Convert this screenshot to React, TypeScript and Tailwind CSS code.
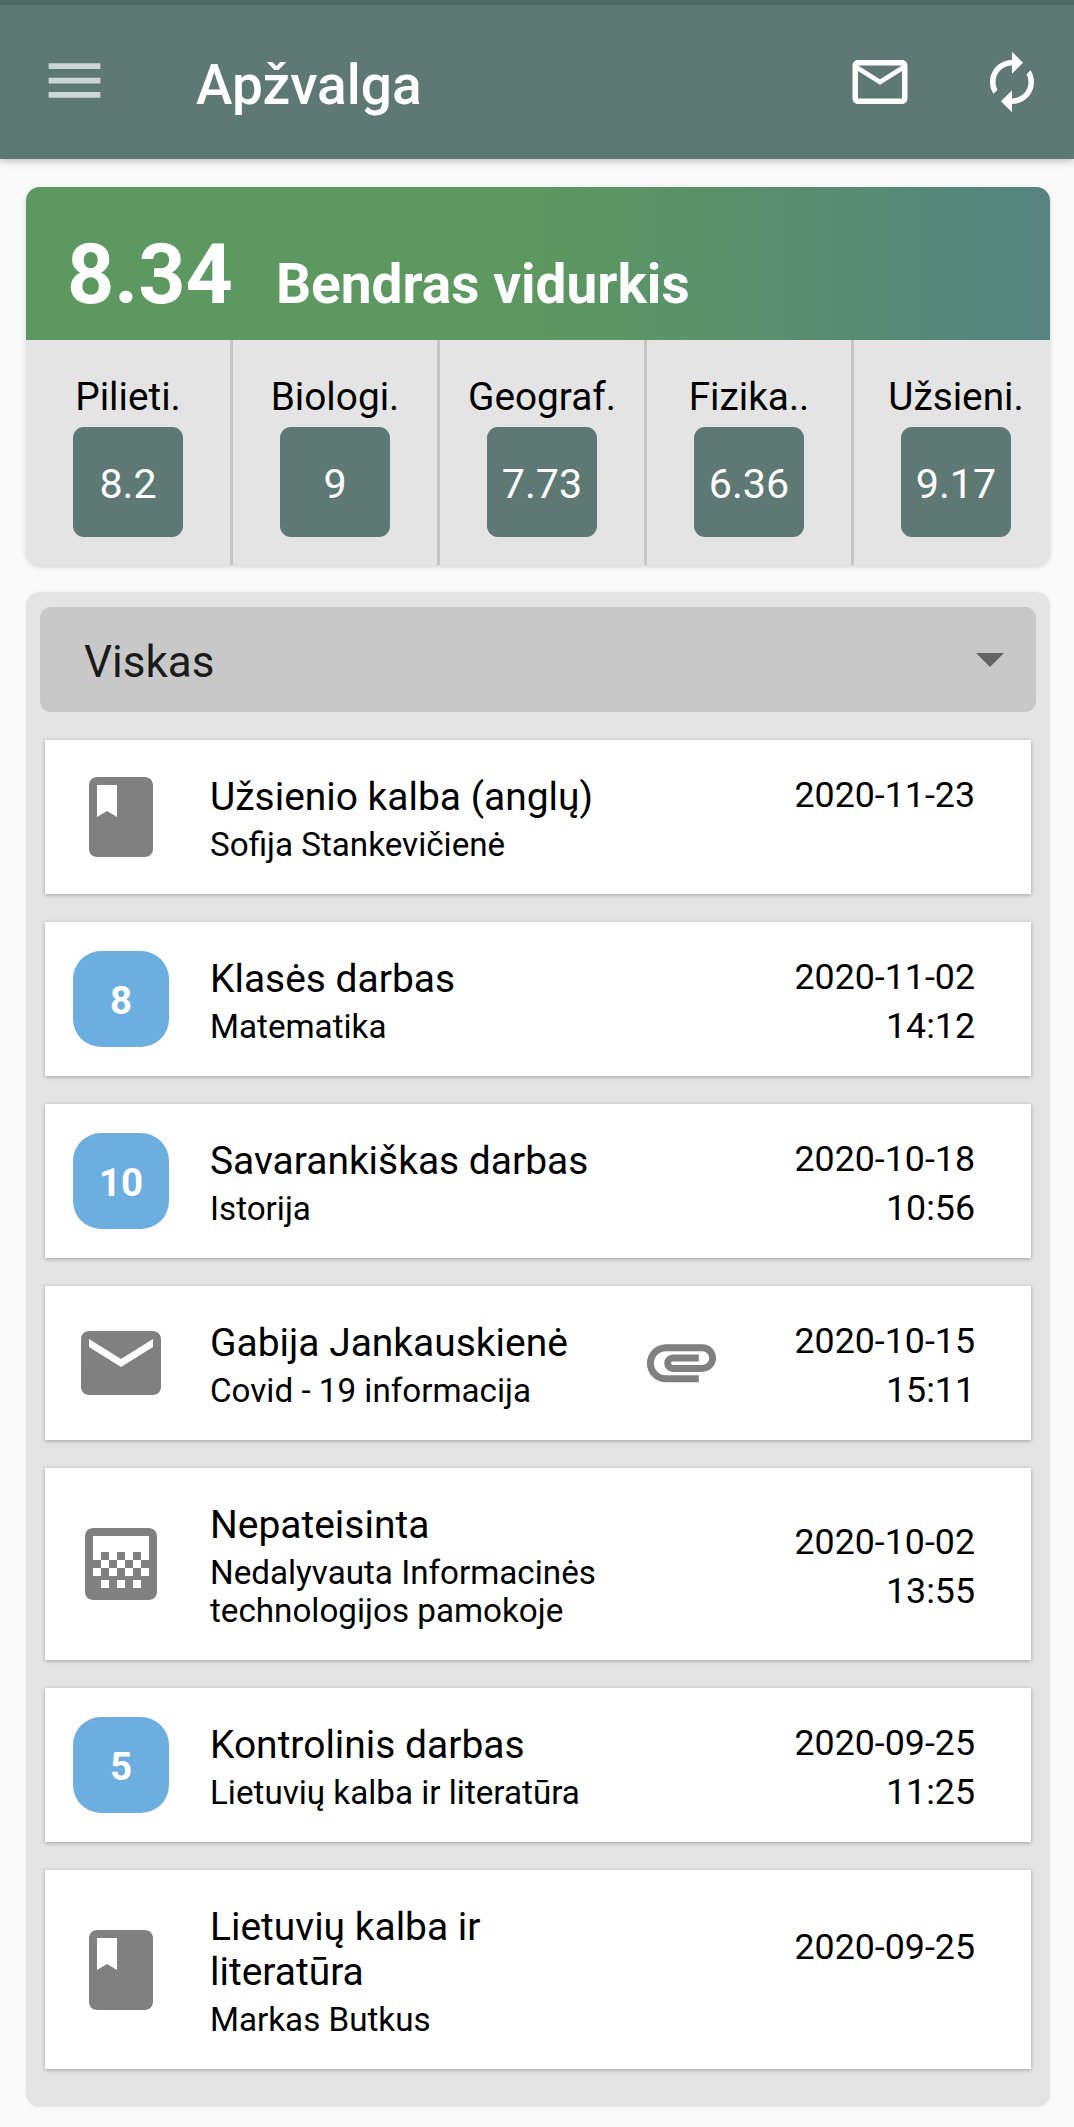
import type { ReactNode } from "react";
import {
  MdAttachment,
  MdAutorenew,
  MdBook,
  MdGradient,
  MdMail,
  MdMailOutline,
  MdMenu,
} from "react-icons/md";

type Subject = { name: string; average: string };

type Entry = {
  icon: ReactNode;
  title: string;
  detail: string;
  date: string;
  time?: string;
  attachment?: boolean;
};

const subjects: Subject[] = [
  { name: "Pilieti.", average: "8.2" },
  { name: "Biologi.", average: "9" },
  { name: "Geograf.", average: "7.73" },
  { name: "Fizika..", average: "6.36" },
  { name: "Užsieni.", average: "9.17" },
];

function Grade({ value }: { value: number }) {
  return (
    <div className="flex size-[96px] items-center justify-center rounded-[28px] bg-[#6caedf] pt-[5px] text-[38.5px] font-bold leading-none text-white">
      {value}
    </div>
  );
}

const entries: Entry[] = [
  {
    icon: <MdBook className="size-[96px]" />,
    title: "Užsienio kalba (anglų)",
    detail: "Sofija Stankevičienė",
    date: "2020-11-23",
  },
  {
    icon: <Grade value={8} />,
    title: "Klasės darbas",
    detail: "Matematika",
    date: "2020-11-02",
    time: "14:12",
  },
  {
    icon: <Grade value={10} />,
    title: "Savarankiškas darbas",
    detail: "Istorija",
    date: "2020-10-18",
    time: "10:56",
  },
  {
    icon: <MdMail className="size-[96px]" />,
    title: "Gabija Jankauskienė",
    detail: "Covid - 19 informacija",
    date: "2020-10-15",
    time: "15:11",
    attachment: true,
  },
  {
    icon: <MdGradient className="size-[96px]" />,
    title: "Nepateisinta",
    detail: "Nedalyvauta Informacinės technologijos pamokoje",
    date: "2020-10-02",
    time: "13:55",
  },
  {
    icon: <Grade value={5} />,
    title: "Kontrolinis darbas",
    detail: "Lietuvių kalba ir literatūra",
    date: "2020-09-25",
    time: "11:25",
  },
  {
    icon: <MdBook className="size-[96px]" />,
    title: "Lietuvių kalba ir literatūra",
    detail: "Markas Butkus",
    date: "2020-09-25",
  },
];

function Header() {
  return (
    <header className="relative flex h-[159px] items-center border-t-[5px] border-[#506b66] bg-[#5e7973] pl-[40px] pr-[29px] text-white shadow-[0_2px_8px_rgba(0,0,0,0.25)]">
      <MdMenu className="mb-[3px] size-[69px] text-[#cbd7d5]" />
      <h1 className="ml-[87px] mt-[6px] text-[55px] font-medium leading-[64px]">Apžvalga</h1>
      <MdMailOutline className="ml-auto size-[66px]" />
      <MdAutorenew className="ml-[66px] size-[66px]" />
    </header>
  );
}

function SubjectCell({ name, average }: Subject) {
  return (
    <div className="flex w-[207px] shrink-0 flex-col items-center border-r-[3px] border-[#c6c6c6] pt-[34px]">
      <span className="text-[38.75px] leading-[46px] text-black">{name}</span>
      <div className="mt-[7px] flex size-[110px] items-center justify-center rounded-[11px] bg-[#5e7973] pt-[5px] text-[41.25px] leading-none text-white">
        {average}
      </div>
    </div>
  );
}

function Averages() {
  return (
    <section className="h-[378px] overflow-hidden rounded-[14px] bg-[#e4e4e4] shadow-[0_2px_5px_rgba(0,0,0,0.15)]">
      <div className="flex h-[153px] items-baseline bg-linear-to-r from-[#5c985f] from-50% to-[#57827f] pl-[41px] pt-[40px] font-bold text-white">
        <span className="text-[82.5px] leading-[96px]">8.34</span>
        <span className="ml-[43px] text-[55px] leading-[64px]">Bendras vidurkis</span>
      </div>
      <div className="flex h-[225px]">
        {subjects.map((s) => (
          <SubjectCell key={s.name} {...s} />
        ))}
      </div>
    </section>
  );
}

function EntryCard({ icon, title, detail, date, time, attachment }: Entry) {
  return (
    <article className="flex items-center bg-white pr-[56px] text-black shadow-[0_1px_4px_rgba(0,0,0,0.3)]">
      <div className="flex w-[152px] justify-center text-[#808080]">{icon}</div>
      <div className="ml-[13px] w-[400px] pb-[30px] pt-[35px]">
        <h2 className="text-[38.95px] leading-[45px]">{title}</h2>
        <p className="mt-[6px] text-[33.2px] leading-[38px]">{detail}</p>
      </div>
      {attachment && <MdAttachment className="mb-[3px] ml-[30px] size-[83px] text-[#808080]" />}
      <div className="ml-auto flex h-[93px] flex-col text-right text-[35.75px] leading-[49px]">
        <span>{date}</span>
        {time && <span>{time}</span>}
      </div>
    </article>
  );
}

export default function App() {
  return (
    <div className="h-[2127px] w-[1074px] overflow-hidden bg-[#fafafa] font-['Roboto',sans-serif]">
      <Header />
      <main className="flex flex-col gap-[27px] pl-[26px] pr-[24px] pt-[28px]">
        <Averages />
        <section className="h-[1515px] rounded-[14px] bg-[#e4e4e4] pt-[15px] shadow-[0_0_4px_rgba(0,0,0,0.06)]">
          <button className="mx-[14px] flex h-[105px] w-[996px] items-center justify-between rounded-[11px] bg-[#c8c8c8] pl-[44px] pr-[32px] text-[44px] leading-none text-[#1b1b1b]">
            <span className="pt-[5px]">Viskas</span>
            <svg className="h-[14px] w-[28px]" viewBox="0 0 10 5" fill="#646464">
              <path d="M0 0h10L5 5z" />
            </svg>
          </button>
          <div className="mx-[19px] mt-[28px] flex flex-col gap-[28px]">
            {entries.map((e) => (
              <EntryCard key={e.date + e.title} {...e} />
            ))}
          </div>
        </section>
      </main>
    </div>
  );
}
